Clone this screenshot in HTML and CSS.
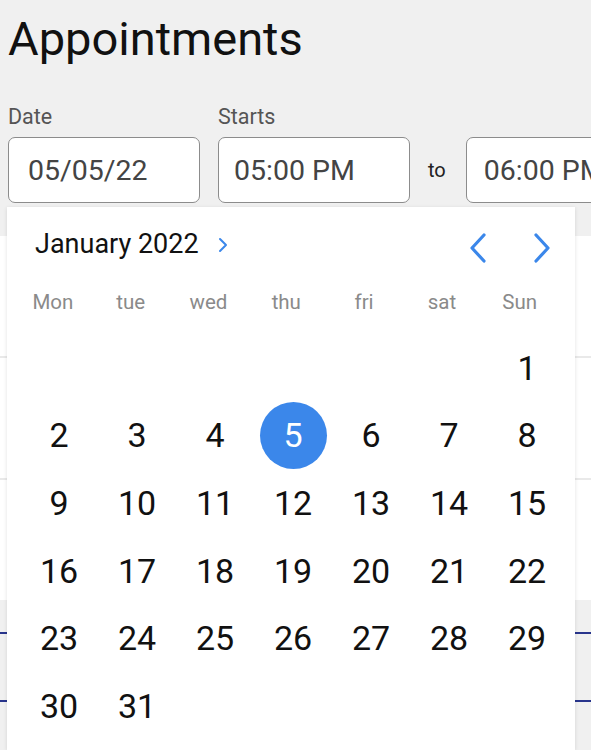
FILE: index.html
```html
<!DOCTYPE html>
<html lang="en">
<head>
  <meta charset="UTF-8" />
  <meta name="viewport" content="width=device-width, initial-scale=1.0" />
  <title>Appointments</title>
  <link rel="stylesheet" href="styles.css">
</head>
<body>
  <div class="top">
    <h1>Appointments</h1>

    <div class="form-row">
      <div class="field">
        <label>Date</label>
        <div class="input">05/05/22</div>
      </div>
      <div class="field">
        <label>Starts</label>
        <div class="input input-time">05:00 PM</div>
      </div>
      <span class="to">to</span>
      <div class="field">
        <label>&nbsp;</label>
        <div class="input input-end">06:00 PM</div>
      </div>
    </div>
  </div>

  <div class="list">
    <div class="list-row"></div>
    <div class="list-row"></div>
    <div class="list-row"></div>
  </div>
  <div class="grid-area">
    <div class="slot"></div>
    <div class="slot"></div>
  </div>

  <div class="calendar">
    <div class="cal-head">
      <div class="month">
        January 2022
        <svg class="month-caret" width="12" height="16" viewBox="0 0 12 16">
          <path d="M3 2 L9 8 L3 14" fill="none" stroke="#3b87ea" stroke-width="2" stroke-linecap="round" stroke-linejoin="round"/>
        </svg>
      </div>
      <div class="nav">
        <svg width="22" height="32" viewBox="0 0 22 32">
          <path d="M17 3 L5 16 L17 29" fill="none" stroke="#3b87ea" stroke-width="3.2" stroke-linecap="round" stroke-linejoin="round"/>
        </svg>
        <svg width="22" height="32" viewBox="0 0 22 32">
          <path d="M5 3 L17 16 L5 29" fill="none" stroke="#3b87ea" stroke-width="3.2" stroke-linecap="round" stroke-linejoin="round"/>
        </svg>
      </div>
    </div>

    <div class="weekdays">
      <span>Mon</span><span>tue</span><span>wed</span><span>thu</span><span>fri</span><span>sat</span><span>Sun</span>
    </div>

    <div class="days">
      <span></span><span></span><span></span><span></span><span></span><span></span><span>1</span>
      <span>2</span><span>3</span><span>4</span><span class="selected">5</span><span>6</span><span>7</span><span>8</span>
      <span>9</span><span>10</span><span>11</span><span>12</span><span>13</span><span>14</span><span>15</span>
      <span>16</span><span>17</span><span>18</span><span>19</span><span>20</span><span>21</span><span>22</span>
      <span>23</span><span>24</span><span>25</span><span>26</span><span>27</span><span>28</span><span>29</span>
      <span>30</span><span>31</span>
    </div>
  </div>
</body>
</html>
```

FILE: styles.css
```css
html {
  overflow: hidden;
}
body {
  margin: 0;
  font-family: Roboto, "Noto Sans", sans-serif;
  background-color: #f0f0f0;
  color: #111;
  overflow: hidden;
  height: 750px;
  position: relative;
}
.top {
  padding: 0 8px;
  overflow: hidden;
}
h1 {
  margin: 11px 0 0;
  font-size: 47px;
  font-weight: 400;
  line-height: 55px;
  color: #111;
}
.form-row {
  display: flex;
  align-items: flex-end;
  gap: 18px;
  margin-top: 39px;
  white-space: nowrap;
}
.field {
  display: flex;
  flex-direction: column;
  gap: 8px;
}
.field label {
  font-size: 21.5px;
  line-height: 24px;
  color: #555;
}
.input {
  width: 192px;
  height: 66px;
  box-sizing: border-box;
  border: 1.5px solid #8c8c8c;
  border-radius: 7px;
  background: white;
  padding-left: 19px;
  font-size: 28.5px;
  line-height: 66px;
  color: #444;
  overflow: hidden;
}
.input-time {
  padding-left: 15px;
}
.input-end {
  padding-left: 17px;
}
.to {
  font-size: 20px;
  line-height: 66px;
  color: #222;
  margin-right: 2px;
}
.list {
  margin-top: 33px;
  background: white;
}
.list-row {
  height: 120px;
  border-bottom: 2px solid #e9e9e9;
}
.list-row:last-child {
  border-bottom: none;
}
.grid-area {
  padding-top: 32px;
}
.slot {
  height: 66px;
  border-top: 2px solid #28358c;
}
.calendar {
  position: absolute;
  top: 207px;
  left: 7px;
  width: 568px;
  height: 543px;
  background: white;
  box-shadow: 0 1px 4px rgba(0, 0, 0, 0.12);
}
.cal-head {
  display: flex;
  justify-content: space-between;
  align-items: flex-start;
  padding: 22px 22px 0 28px;
  height: 41px;
}
.month {
  display: flex;
  align-items: center;
  gap: 18px;
  font-size: 27px;
  line-height: 30px;
  color: #111;
}
.month-caret {
  margin-top: 1px;
}
.nav {
  display: flex;
  gap: 42px;
  margin-top: 3px;
}
.weekdays {
  display: grid;
  grid-template-columns: repeat(7, 77.8px);
  padding-left: 7px;
  height: 64px;
  align-items: center;
  font-size: 20.5px;
  color: #8a8a8a;
}
.weekdays span {
  text-align: center;
}
.days {
  display: grid;
  grid-template-columns: repeat(7, 78px);
  grid-auto-rows: 67.6px;
  padding-left: 13px;
  font-size: 34px;
  color: #111;
}
.days span {
  display: flex;
  align-items: center;
  justify-content: center;
}
.days .selected {
  width: 67px;
  height: 67px;
  margin: 0 auto;
  border-radius: 50%;
  background: #3b87ea;
  color: white;
}
```
